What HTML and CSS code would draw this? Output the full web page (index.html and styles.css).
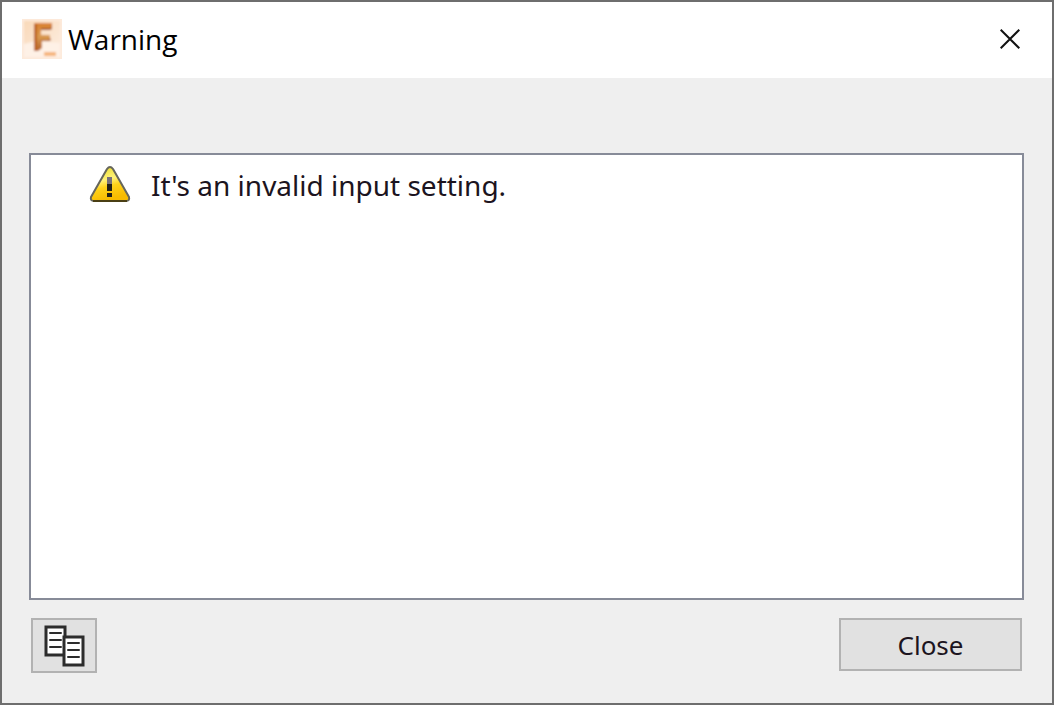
FILE: index.html
```html
<!DOCTYPE html>
<html lang="en">
<head>
  <meta charset="UTF-8" />
  <meta name="viewport" content="width=device-width, initial-scale=1" />
  <title>Warning</title>
  <link rel="stylesheet" href="styles.css">
</head>
<body>

<div class="dialog" role="dialog" aria-labelledby="dialogTitle">
  <header class="titlebar">
    <svg class="app-icon" viewBox="0 0 40 40" aria-hidden="true">
      <defs>
        <linearGradient id="tile" x1="0" y1="0" x2="1" y2="1">
          <stop offset="0" stop-color="#f9d9b9" />
          <stop offset="1" stop-color="#fdeee2" />
        </linearGradient>
        <linearGradient id="letter" x1="0" y1="0" x2="0" y2="1">
          <stop offset="0" stop-color="#d9802f" />
          <stop offset="0.5" stop-color="#d99a50" />
          <stop offset="1" stop-color="#b4612a" />
        </linearGradient>
        <filter id="soft">
          <feGaussianBlur stdDeviation="0.8" />
        </filter>
      </defs>
      <rect width="40" height="40" fill="#fdeadb" />
      <g filter="url(#soft)">
        <rect x="2" y="2" width="36" height="36" fill="url(#tile)" />
        <path d="M2 25l12-3 24 2v14H2z" fill="#fef1e6" />
        <path d="M12 5q0-1 1-1h17v5H19v7h9v5h-8v8l-4 3h-4z" fill="url(#letter)" />
        <path d="M19 9h10l1-4v5l-2 1h-9zM19 21h8v-2l2 1-1 2h-9z" fill="#a9541c" />
        <path d="M12 5h3v26h-3z" fill="#bd6524" />
        <rect x="22" y="33" width="12" height="4" fill="#f5b57c" />
      </g>
    </svg>
    <h1 id="dialogTitle">Warning</h1>
    <button class="close-x" type="button" aria-label="Close window">
      <svg viewBox="0 0 20 20" aria-hidden="true">
        <path d="M0.7 0.7l18.6 18.6M19.3 0.7L0.7 19.3" stroke="#111" stroke-width="2" fill="none" />
      </svg>
    </button>
  </header>

  <main class="content">
    <ul class="messages">
      <li>
        <svg class="warning-icon" viewBox="0 0 42 38" aria-hidden="true">
          <defs>
            <linearGradient id="yellow" x1="0" y1="0" x2="0.3" y2="1">
              <stop offset="0" stop-color="#e6d81c" />
              <stop offset="0.45" stop-color="#fff27a" />
              <stop offset="0.65" stop-color="#ffd21a" />
              <stop offset="1" stop-color="#f8bb00" />
            </linearGradient>
          </defs>
          <path d="M18 3Q21 -1 24 3L40 31Q41 35 37 35H5Q1 35 2 31Z" fill="url(#yellow)" stroke="#66665c" stroke-width="2" stroke-linejoin="round" />
          <path d="M4 35h34" stroke="#4a3f14" stroke-width="2" />
          <path d="M18 11h5v8h-5z" fill="#77707a" />
          <path d="M18 18h5v7h-5zM18 27h5v4h-5z" fill="#222018" />
        </svg>
        <span>It's an invalid input setting.</span>
      </li>
    </ul>

    <footer class="actions">
      <button class="copy" type="button" aria-label="Copy">
        <svg viewBox="0 0 42 42" aria-hidden="true">
          <g fill="#fff" stroke="#2c2c2c" stroke-width="3">
            <path d="M3 2h19v28H3z" />
            <path d="M21 12h19v28H21z" />
          </g>
          <path d="M7 8h11M7 15h11M7 22h11M25 18h11M25 25h11M25 32h11" stroke="#2c2c2c" stroke-width="2" stroke-linecap="round" />
        </svg>
      </button>
      <button class="close" type="button">Close</button>
    </footer>
  </main>
</div>

</body>
</html>
```
FILE: styles.css
```css
* {
  box-sizing: border-box;
}

body {
  margin: 0;
  color: #000;
  font-family: "Noto Sans", "Open Sans", sans-serif;
}

.dialog {
  display: flex;
  flex-direction: column;
  min-height: 100vh;
  background-color: #efefef;
  border: 2px solid #6e6e6e;
}

.titlebar {
  display: flex;
  align-items: center;
  height: 76px;
  padding: 0 32px 2px 20px;
  background-color: #fff;
}

.app-icon {
  width: 40px;
  height: 40px;
  margin-right: 6px;
}

.titlebar h1 {
  margin: 0;
  font-family: "Open Sans", sans-serif;
  font-size: 28px;
  font-weight: 400;
}

.close-x {
  display: flex;
  margin-left: auto;
  padding: 0;
  background: none;
  border: 0;
}

.close-x svg {
  width: 20px;
  height: 20px;
}

.content {
  display: flex;
  flex: 1;
  flex-direction: column;
  padding: 75px 28px 30px 27px;
}

.messages {
  flex: 1;
  margin: 0;
  padding: 10px 58px;
  list-style: none;
  background-color: #fff;
  border: 2px solid #878b98;
}

.messages li {
  display: flex;
  align-items: center;
  gap: 20px;
  color: #1c1420;
  font-size: 28px;
  line-height: 40px;
}

.warning-icon {
  flex: none;
  width: 42px;
  height: 38px;
}

.actions {
  display: flex;
  justify-content: space-between;
  align-items: flex-start;
  padding: 18px 2px 0;
}

.actions button {
  display: flex;
  align-items: center;
  justify-content: center;
  padding: 0;
  color: #1c1420;
  font-family: inherit;
  font-size: 26px;
  background-color: #e1e1e1;
  border: 2px solid #b2b2b2;
}

.actions .copy {
  width: 66px;
  height: 55px;
}

.actions .close {
  width: 183px;
  height: 53px;
}

.copy svg {
  width: 42px;
  height: 42px;
}
```
